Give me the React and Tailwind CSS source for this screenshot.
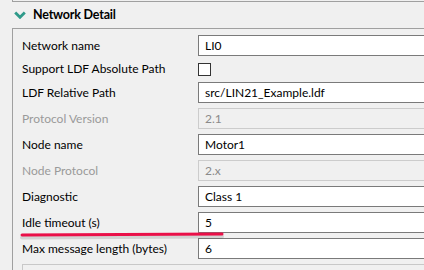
import React from 'react';

const rows = [
  { label: 'Network name', value: 'LI0' },
  { label: 'Support LDF Absolute Path', checkbox: true },
  { label: 'LDF Relative Path', value: 'src/LIN21_Example.ldf' },
  { label: 'Protocol Version', value: '2.1', disabled: true },
  { label: 'Node name', value: 'Motor1' },
  { label: 'Node Protocol', value: '2.x', disabled: true },
  { label: 'Diagnostic', value: 'Class 1' },
  { label: 'Idle timeout (s)', value: '5' },
  { label: 'Max message length (bytes)', value: '6' },
];

function Field({ row }) {
  if (row.checkbox) {
    return (
      <div className="flex h-[16px] items-center">
        <div className="w-[176px] text-black">{row.label}</div>
        <div className="mt-[1px] h-[13px] w-[13px] border border-[#333333] bg-white" />
      </div>
    );
  }
  return (
    <div className="flex h-[21px] items-center">
      <div className={`w-[176px] ${row.disabled ? 'text-[#9a9a9a]' : 'text-black'}`}>{row.label}</div>
      <div
        className={
          row.disabled
            ? 'flex h-[21px] flex-1 items-center border border-r-0 border-[#cccccc] bg-[#f0f0f0] pl-[6px] text-[#8a8a8a]'
            : 'flex h-[21px] flex-1 items-center border border-r-0 border-[#7a7a7a] bg-white pl-[6px] text-black'
        }
      >
        {row.value}
      </div>
    </div>
  );
}

export default function App() {
  return (
    <div className="relative h-[270px] w-[424px] overflow-hidden bg-[#f0f0f0] text-[12px] leading-none font-['Lato',sans-serif]">
      <div className="ml-[12px] h-[2px] border-b border-l border-[#a0a0a0]" />
      <div className="flex h-[26px] items-center pl-[14px]">
        <svg width="12" height="8" viewBox="0 0 12 8" className="mr-[7px]">
          <polyline points="1.2,1.5 6,6.3 10.8,1.5" fill="none" stroke="#2f9a8a" strokeWidth="2.8" />
        </svg>
        <span className="text-[12.5px] font-bold tracking-[-0.2px] text-black">Network Detail</span>
      </div>
      <div className="ml-[12px] border-t border-l border-[#a0a0a0] pt-[6px] pl-[9px]">
        <div className="flex flex-col gap-[5px]">
          {rows.map((r) => (
            <Field key={r.label} row={r} />
          ))}
          <div className="h-[30px] border-t border-l border-[#c8c8c8]" />
        </div>
      </div>
      <svg className="absolute left-[18px] top-[230px]" width="210" height="12" viewBox="0 0 210 12">
        <line x1="4" y1="7.5" x2="204" y2="6.5" stroke="#000" strokeOpacity="0.12" strokeWidth="4" strokeLinecap="round" />
        <line x1="4" y1="5" x2="204" y2="4" stroke="#ea0f48" strokeWidth="3" strokeLinecap="round" />
      </svg>
    </div>
  );
}
